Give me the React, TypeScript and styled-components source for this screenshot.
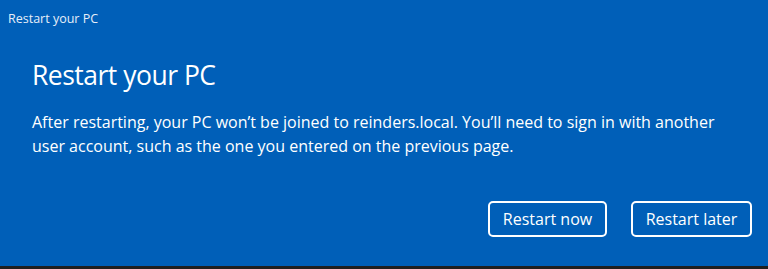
import React from "react";
import styled, { createGlobalStyle } from "styled-components";

const Global = createGlobalStyle`
  html, body { margin: 0; padding: 0; background: #1f1f1f; }
  body { font-family: "Open Sans", "Noto Sans", sans-serif; }
`;

const Window = styled.div`
  width: 768px;
  height: 266px;
  background: #005fb8;
  color: #ffffff;
  display: flex;
  flex-direction: column;
  box-sizing: border-box;
`;

const TitleBar = styled.div`
  height: 36px;
  padding: 0 8px 1px 8px;
  display: flex;
  align-items: center;
  font-size: 12.5px;
  color: #e6eef8;
`;

const Content = styled.div`
  padding: 20px 16px 0 32px;
  display: flex;
  flex-direction: column;
  flex: 1;
`;

const Heading = styled.h1`
  margin: 0;
  font-weight: 400;
  font-size: 26.5px;
  letter-spacing: -0.5px;
  line-height: 36px;
`;

const Body = styled.p`
  margin: 17px 0 0 0;
  font-size: 16px;
  line-height: 24px;
  max-width: 700px;
`;

const Actions = styled.div`
  display: flex;
  justify-content: flex-end;
  gap: 24px;
  margin-top: 43px;
`;

const Button = styled.button<{ $w: number }>`
  font-family: inherit;
  font-size: 16px;
  color: #ffffff;
  background: transparent;
  border: 2px solid #ffffff;
  border-radius: 5px;
  height: 36px;
  padding: 0;
  box-sizing: border-box;
  width: ${(p) => p.$w}px;
`;

export default function App() {
  return (
    <>
      <Global />
      <Window>
        <TitleBar>Restart your PC</TitleBar>
        <Content>
          <Heading>Restart your PC</Heading>
          <Body>
            After restarting, your PC won’t be joined to reinders.local. You’ll need to sign in with another
            user account, such as the one you entered on the previous page.
          </Body>
          <Actions>
            <Button $w={119}>Restart now</Button>
            <Button $w={121}>Restart later</Button>
          </Actions>
        </Content>
      </Window>
    </>
  );
}
